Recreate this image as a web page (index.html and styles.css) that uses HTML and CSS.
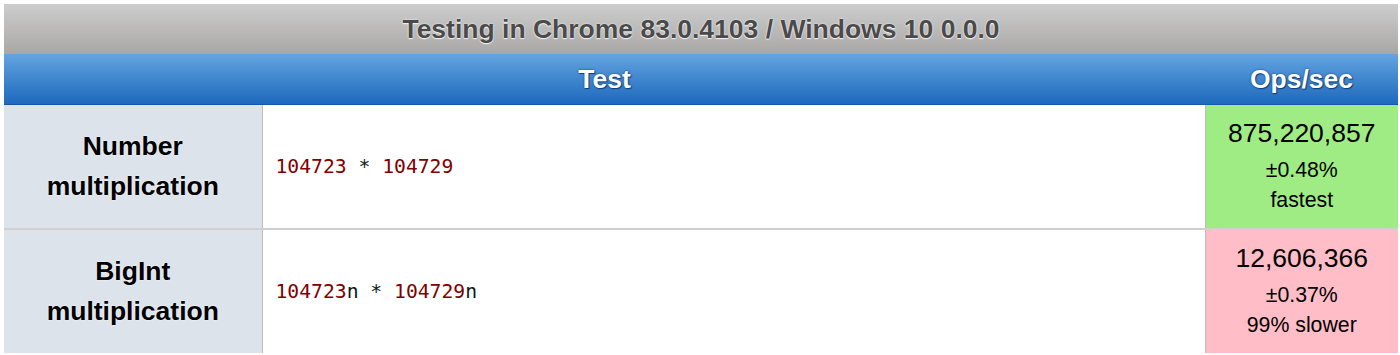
FILE: index.html
```html
<!DOCTYPE html>
<html>
<head>
<meta charset="utf-8">
<link rel="stylesheet" href="styles.css">
</head>
<body>
<table class="results">
  <colgroup>
    <col class="col-name">
    <col class="col-code">
    <col class="col-ops">
  </colgroup>
  <thead>
    <tr class="title-row"><th colspan="3">Testing in Chrome 83.0.4103 / Windows 10 0.0.0</th></tr>
    <tr class="head-row"><th colspan="2">Test</th><th>Ops/sec</th></tr>
  </thead>
  <tbody>
    <tr>
      <th class="name">Number<br>multiplication</th>
      <td class="code"><code><span class="num">104723</span> <span class="op">*</span> <span class="num">104729</span></code></td>
      <td class="ops fast"><div class="rate">875,220,857</div><div class="err">±0.48%</div><div class="note">fastest</div></td>
    </tr>
    <tr>
      <th class="name">BigInt<br>multiplication</th>
      <td class="code"><code><span class="num">104723</span><span class="op">n</span> <span class="op">*</span> <span class="num">104729</span><span class="op">n</span></code></td>
      <td class="ops slow"><div class="rate">12,606,366</div><div class="err">±0.37%</div><div class="note">99% slower</div></td>
    </tr>
  </tbody>
</table>
</body>
</html>
```
FILE: styles.css
```css
html, body {
  margin: 0;
  padding: 0;
  background: #fff;
}
body {
  padding: 4px 2px 0 4px;
  font-family: "Liberation Sans", Arial, sans-serif;
}
.results {
  width: 1394px;
  border-collapse: collapse;
  table-layout: fixed;
}
.col-name { width: 258px; }
.col-code { width: 943px; }
.col-ops { width: 193px; }
.results th, .results td {
  padding: 0;
}
.title-row th {
  height: 50px;
  background: linear-gradient(#cdcdcd, #a9a7a6);
  color: #4a4a4a;
  font-size: 26.5px;
  font-weight: bold;
  text-shadow: 0 0 2px #fff, 0 1px 1px #eee;
  text-align: center;
}
.head-row th {
  height: 50px;
  background: linear-gradient(#64a4e0, #1d69bd);
  color: #fff;
  font-size: 26.5px;
  font-weight: bold;
  text-shadow: 0 0 2px #123a70, 1px 1px 1px #163f78;
  text-align: center;
  border-bottom: 1px solid #1558a8;
}
tbody tr {
  height: 124px;
}
tbody tr + tr {
  border-top: 2px solid #d0d0d0;
}
.name {
  background: #dde3ea;
  font-size: 26.5px;
  font-weight: bold;
  line-height: 40px;
  color: #000;
  text-shadow: 0 0 2px #fff;
  text-align: center;
  border-right: 1px solid #bdbdbd;
}
.code {
  background: #fff;
  padding-left: 13px !important;
  border-right: 1px solid #bdbdbd;
}
.code code {
  font-family: "DejaVu Sans Mono", "Liberation Mono", monospace;
  font-size: 19.7px;
  color: #111;
}
.num { color: #800000; }
.op { color: #0a1a1a; }
.results .ops {
  text-align: center;
  color: #000;
  vertical-align: middle;
  padding-bottom: 5px;
}
.fast { background: #a0ec84; }
.slow { background: #ffbdc8; }
.rate {
  font-size: 26.5px;
  line-height: 40px;
  padding-bottom: 2px;
}
.err, .note {
  font-size: 21.3px;
  line-height: 30px;
}
```
